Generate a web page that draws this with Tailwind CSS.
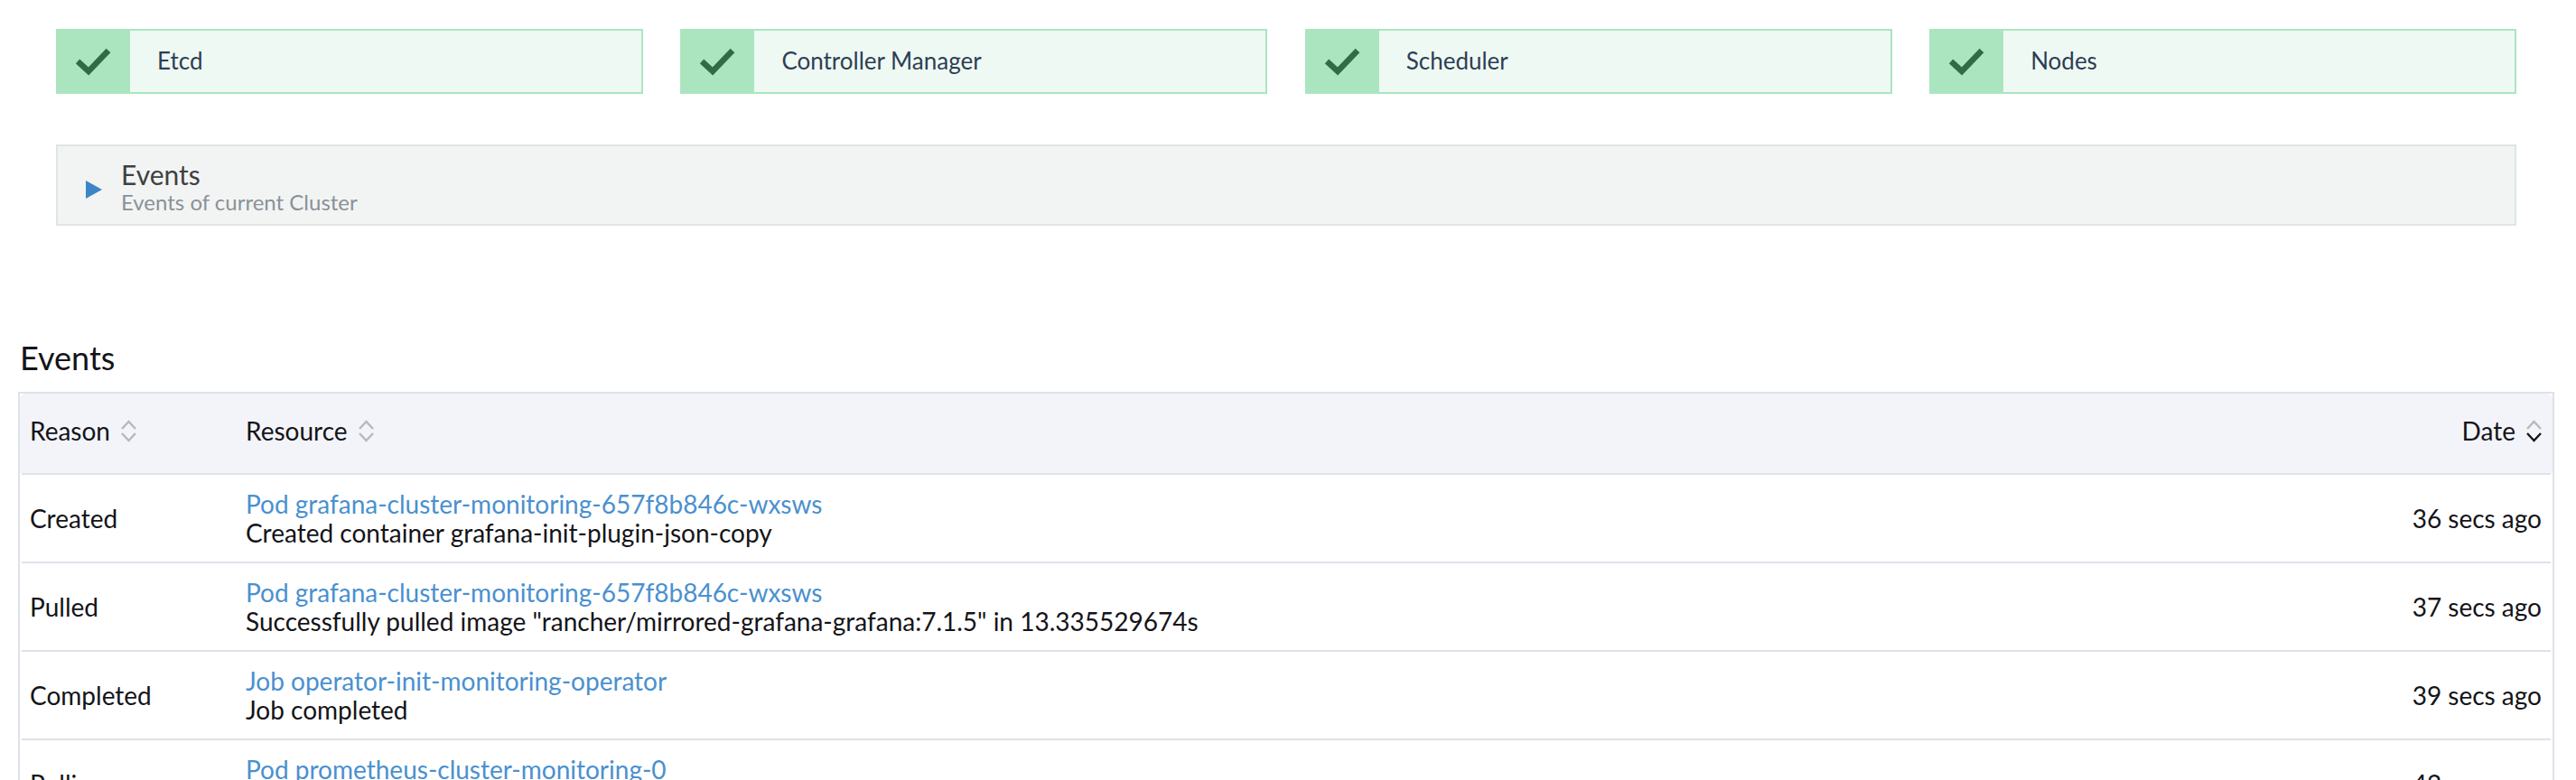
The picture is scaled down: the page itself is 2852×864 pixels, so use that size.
<!DOCTYPE html>
<html lang="en">
<head>
    <meta charset="UTF-8">
    <title>Cluster Dashboard</title>
    <script src="https://cdn.jsdelivr.net/npm/@tailwindcss/browser@4"></script>
</head>
<body class="bg-white h-[864px] overflow-hidden font-['Lato',sans-serif] text-[#141419]">
    <!-- Health checks -->
    <div class="grid grid-cols-4 gap-[41.5px] pt-[32px] pl-[62px] pr-[66px]">
        <div class="flex h-[72px] border-2 border-[#abe5bf] bg-[#eff9f3]">
            <div class="w-[80px] bg-[#abe5bf] flex items-center justify-center">
                <svg class="w-[40px] h-[32px] text-[#316a43]" viewBox="0 0 40 32" fill="none" stroke="currentColor" stroke-width="6.5"><path d="M2 16 L14 27 L36 4"/></svg>
            </div>
            <div class="pl-[30px] pb-[2px] flex items-center text-[26px] text-[#2d3e55]">Etcd</div>
        </div>
        <div class="flex h-[72px] border-2 border-[#abe5bf] bg-[#eff9f3]">
            <div class="w-[80px] bg-[#abe5bf] flex items-center justify-center">
                <svg class="w-[40px] h-[32px] text-[#316a43]" viewBox="0 0 40 32" fill="none" stroke="currentColor" stroke-width="6.5"><path d="M2 16 L14 27 L36 4"/></svg>
            </div>
            <div class="pl-[30px] pb-[2px] flex items-center text-[26px] text-[#2d3e55]">Controller Manager</div>
        </div>
        <div class="flex h-[72px] border-2 border-[#abe5bf] bg-[#eff9f3]">
            <div class="w-[80px] bg-[#abe5bf] flex items-center justify-center">
                <svg class="w-[40px] h-[32px] text-[#316a43]" viewBox="0 0 40 32" fill="none" stroke="currentColor" stroke-width="6.5"><path d="M2 16 L14 27 L36 4"/></svg>
            </div>
            <div class="pl-[30px] pb-[2px] flex items-center text-[26px] text-[#2d3e55]">Scheduler</div>
        </div>
        <div class="flex h-[72px] border-2 border-[#abe5bf] bg-[#eff9f3]">
            <div class="w-[80px] bg-[#abe5bf] flex items-center justify-center">
                <svg class="w-[40px] h-[32px] text-[#316a43]" viewBox="0 0 40 32" fill="none" stroke="currentColor" stroke-width="6.5"><path d="M2 16 L14 27 L36 4"/></svg>
            </div>
            <div class="pl-[30px] pb-[2px] flex items-center text-[26px] text-[#2d3e55]">Nodes</div>
        </div>
    </div>

    <!-- Collapsed events accordion -->
    <div class="mt-[56px] ml-[62px] mr-[66px] h-[90px] border-2 border-[#dfe4e8] bg-[#f2f4f3] flex items-center">
        <svg class="ml-[31px] mt-[10px] w-[18px] h-[20px] text-[#3d85c6]" viewBox="0 0 18 20" fill="currentColor"><path d="M0 0 L18 10 L0 20 Z"/></svg>
        <div class="ml-[21px] pt-[4px]">
            <div class="text-[30px] leading-[34px] text-[#3f4042]">Events</div>
            <div class="text-[24px] leading-[28px] text-[#8a9199]">Events of current Cluster</div>
        </div>
    </div>

    <h2 class="mt-[124px] ml-[22px] text-[36px] leading-[44px] font-normal">Events</h2>

    <!-- Events table -->
    <div class="mt-[16px] ml-[20px] mr-[24px] border-2 border-[#dee2e9] text-[28px] leading-[32px]">
        <div class="grid grid-cols-[248px_1fr_auto] h-[88px] items-center bg-[#f3f4f9] rounded-t-[6px] pl-[2px] pr-[2px] pb-[6px]">
            <div class="pl-[9px] flex items-center gap-[12px]">Reason
                <svg class="w-[17px] h-[25px] text-[#b7b8bb]" viewBox="0 0 17 25" fill="none" stroke="currentColor" stroke-width="2.4"><path d="M1 10 L8.5 2 L16 10 M1 15 L8.5 23 L16 15"/></svg>
            </div>
            <div class="flex items-center gap-[12px]">Resource
                <svg class="w-[17px] h-[25px] text-[#b7b8bb]" viewBox="0 0 17 25" fill="none" stroke="currentColor" stroke-width="2.4"><path d="M1 10 L8.5 2 L16 10 M1 15 L8.5 23 L16 15"/></svg>
            </div>
            <div class="pr-[10px] flex items-center gap-[12px]">Date
                <svg class="w-[17px] h-[25px]" viewBox="0 0 17 25" fill="none" stroke-width="2.4"><path class="stroke-[#b7b8bb]" d="M1 10 L8.5 2 L16 10"/><path class="stroke-[#141419]" d="M1 15 L8.5 23 L16 15"/></svg>
            </div>
        </div>

        <div class="grid grid-cols-[248px_1fr_auto] h-[98px] mx-[2px] items-center border-t-2 border-[#dee2e9]">
            <div class="pl-[9px]">Created</div>
            <div><a class="block text-[#4a90cf]">Pod grafana-cluster-monitoring-657f8b846c-wxsws</a>Created container grafana-init-plugin-json-copy</div>
            <div class="pr-[10px]">36 secs ago</div>
        </div>
        <div class="grid grid-cols-[248px_1fr_auto] h-[98px] mx-[2px] items-center border-t-2 border-[#dee2e9]">
            <div class="pl-[9px]">Pulled</div>
            <div><a class="block text-[#4a90cf]">Pod grafana-cluster-monitoring-657f8b846c-wxsws</a>Successfully pulled image "rancher/mirrored-grafana-grafana:7.1.5" in 13.335529674s</div>
            <div class="pr-[10px]">37 secs ago</div>
        </div>
        <div class="grid grid-cols-[248px_1fr_auto] h-[98px] mx-[2px] items-center border-t-2 border-[#dee2e9]">
            <div class="pl-[9px]">Completed</div>
            <div><a class="block text-[#4a90cf]">Job operator-init-monitoring-operator</a>Job completed</div>
            <div class="pr-[10px]">39 secs ago</div>
        </div>
        <div class="grid grid-cols-[248px_1fr_auto] h-[98px] mx-[2px] items-center border-t-2 border-[#dee2e9]">
            <div class="pl-[9px]">Pulling</div>
            <div><a class="block text-[#4a90cf]">Pod prometheus-cluster-monitoring-0</a>Pulling image</div>
            <div class="pr-[10px]">42 secs ago</div>
        </div>
    </div>
</body>
</html>
